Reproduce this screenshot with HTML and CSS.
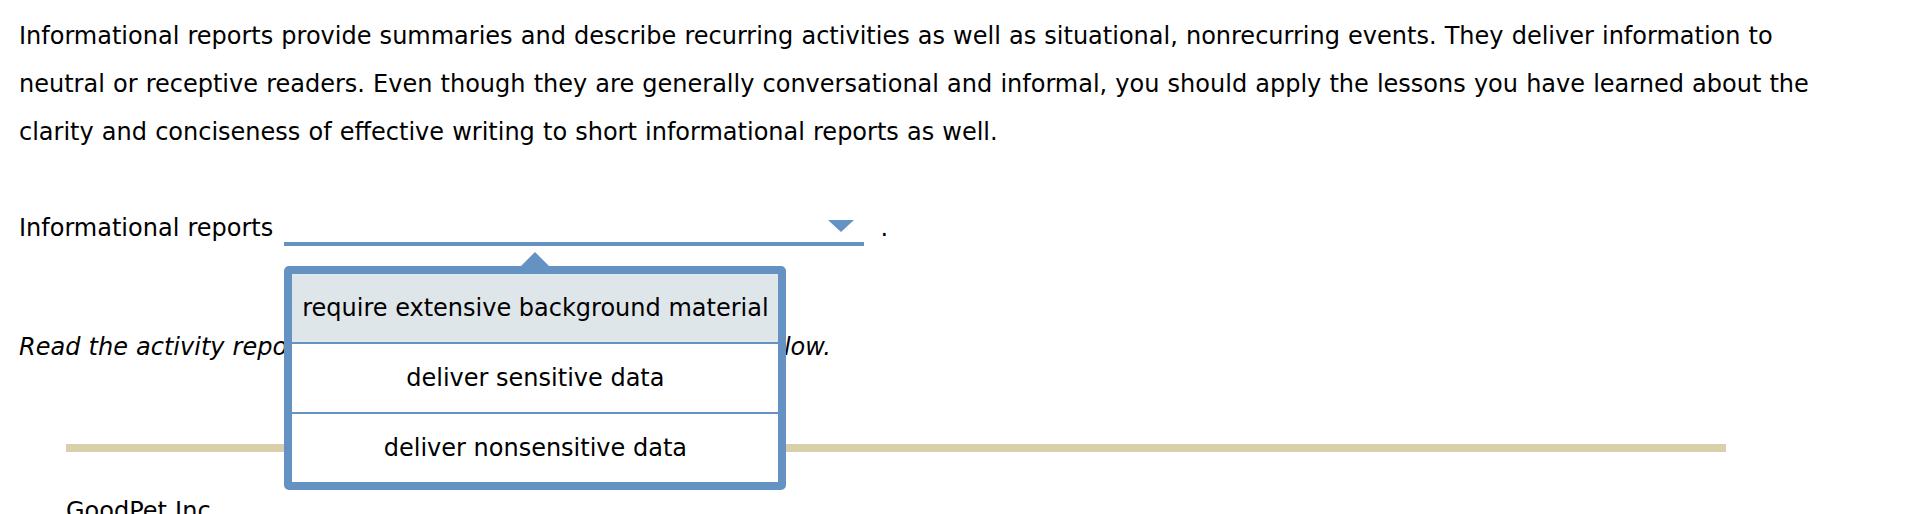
FILE: index.html
```html
<!DOCTYPE html>
<html>
<head>
  <title>Informational reports</title>
  <link rel="stylesheet" href="styles.css">
</head>
<body>
  <div class="page">
      <p class="intro">Informational reports provide summaries and describe recurring activities as well as situational, nonrecurring events. They deliver information to neutral or receptive readers. Even though they are generally conversational and informal, you should apply the lessons you have learned about the clarity and conciseness of effective writing to short informational reports as well.</p>

      <p class="question">Informational reports <span class="select"><svg class="arrow" width="26" height="12" viewBox="0 0 26 12"><polygon points="0,0 26,0 13,12" fill="#6392c3"/></svg><span class="menu">
          <span class="option active">require extensive background material</span>
          <span class="option">deliver sensitive data</span>
          <span class="option">deliver nonsensitive data</span>
      </span></span> .</p>

      <p class="note">Read the activity report and then answer the questions that follow.</p>

      <div class="report">
          <div class="rule"></div>
          <p class="company">GoodPet Inc.</p>
      </div>
  </div>
</body>
</html>
```

FILE: styles.css
```css
body {
margin: 0;
background-color: #fff;
color: #000;
font-family: "DejaVu Sans", Verdana, sans-serif;
font-size: 24px;
word-spacing: 0.5px;
}
.page {
padding: 12px 89px 0 19px;
}
p {
margin: 0;
line-height: 48px;
}
.intro {
margin-bottom: 48px;
}
.question {
margin-bottom: 71px;
}
.select {
display: inline-block;
position: relative;
width: 580px;
height: 30px;
border-bottom: 4px solid #6392c3;
vertical-align: -10px;
margin: 0 8px 0 3px;
}
.arrow {
display: block;
margin: 8px 10px 0 auto;
}
.menu {
position: absolute;
top: 54px;
left: 0;
width: 486px;
border: 8px solid #6392c3;
border-radius: 5px;
background-color: #fff;
display: flex;
flex-direction: column;
word-spacing: 0;
}
.menu::before {
content: '';
position: absolute;
top: -22px;
left: calc(50% - 14px);
border-left: 14px solid transparent;
border-right: 14px solid transparent;
border-bottom: 14px solid #6392c3;
}
.option {
display: block;
padding: 20px 0 19px;
line-height: 29px;
text-align: center;
white-space: nowrap;
}
.option + .option {
border-top: 2px solid #6392c3;
}
.option.active {
background-color: #dfe6e9;
}
.note {
font-style: italic;
margin-bottom: 73px;
}
.report {
padding: 0 107px 0 47px;
}
.rule {
height: 8px;
background-color: #d9cfaa;
}
.company {
margin-top: 35px;
}
```
